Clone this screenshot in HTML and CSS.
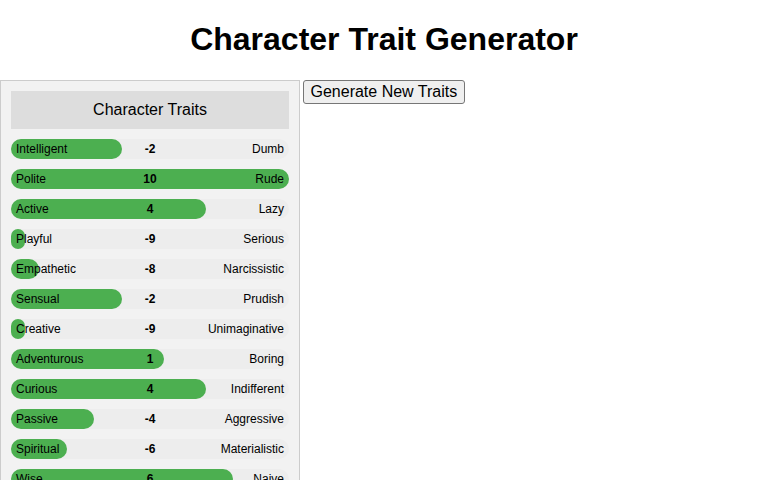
FILE: index.html
```html
<!DOCTYPE html>
<html lang="en">
<head>
<meta charset="utf-8">
<title>Character Trait Generator</title>
<link rel="stylesheet" href="styles.css">
</head>
<body>
<h1 class="title">Character Trait Generator</h1>
<div class="layout">
  <section class="panel">
    <h2 class="panel-head">Character Traits</h2>
    <div class="rows">
      <div class="row"><div class="bar" style="width:111.2px"></div><div class="row-text"><span class="lbl">Intelligent</span><span class="val">-2</span><span class="opp">Dumb</span></div></div>
      <div class="row"><div class="bar" style="width:278px"></div><div class="row-text"><span class="lbl">Polite</span><span class="val">10</span><span class="opp">Rude</span></div></div>
      <div class="row"><div class="bar" style="width:194.6px"></div><div class="row-text"><span class="lbl">Active</span><span class="val">4</span><span class="opp">Lazy</span></div></div>
      <div class="row"><div class="bar" style="width:13.9px"></div><div class="row-text"><span class="lbl">Playful</span><span class="val">-9</span><span class="opp">Serious</span></div></div>
      <div class="row"><div class="bar" style="width:27.8px"></div><div class="row-text"><span class="lbl">Empathetic</span><span class="val">-8</span><span class="opp">Narcissistic</span></div></div>
      <div class="row"><div class="bar" style="width:111.2px"></div><div class="row-text"><span class="lbl">Sensual</span><span class="val">-2</span><span class="opp">Prudish</span></div></div>
      <div class="row"><div class="bar" style="width:13.9px"></div><div class="row-text"><span class="lbl">Creative</span><span class="val">-9</span><span class="opp">Unimaginative</span></div></div>
      <div class="row"><div class="bar" style="width:152.9px"></div><div class="row-text"><span class="lbl">Adventurous</span><span class="val">1</span><span class="opp">Boring</span></div></div>
      <div class="row"><div class="bar" style="width:194.6px"></div><div class="row-text"><span class="lbl">Curious</span><span class="val">4</span><span class="opp">Indifferent</span></div></div>
      <div class="row"><div class="bar" style="width:83.4px"></div><div class="row-text"><span class="lbl">Passive</span><span class="val">-4</span><span class="opp">Aggressive</span></div></div>
      <div class="row"><div class="bar" style="width:55.6px"></div><div class="row-text"><span class="lbl">Spiritual</span><span class="val">-6</span><span class="opp">Materialistic</span></div></div>
      <div class="row"><div class="bar" style="width:222.4px"></div><div class="row-text"><span class="lbl">Wise</span><span class="val">6</span><span class="opp">Naive</span></div></div>
      <div class="row"><div class="bar" style="width:166.8px"></div><div class="row-text"><span class="lbl">Honest</span><span class="val">2</span><span class="opp">Deceitful</span></div></div>
      <div class="row"><div class="bar" style="width:69.5px"></div><div class="row-text"><span class="lbl">Brave</span><span class="val">-5</span><span class="opp">Cowardly</span></div></div>
    </div>
  </section>
  <button class="gen-btn" type="button">Generate New Traits</button>
</div>
</body>
</html>
```

FILE: styles.css
```css
html, body {
  margin: 0;
  padding: 0;
  background: #ffffff;
  font-family: "Liberation Sans", Arial, sans-serif;
  color: #000;
}

.title {
  font-size: 32px;
  font-weight: bold;
  text-align: center;
  margin: 21.44px 0;
  line-height: normal;
}

.layout {
  display: flex;
  align-items: flex-start;
  gap: 3px;
}

.panel {
  width: 278px;
  padding: 10px;
  background: #f2f2f2;
  border: 1px solid #cccccc;
  flex: none;
}

.panel-head {
  margin: 0 0 10px 0;
  padding: 10px;
  background: #dddddd;
  font-size: 16px;
  font-weight: normal;
  text-align: center;
  line-height: 18px;
}

.rows {
  display: flex;
  flex-direction: column;
  gap: 10px;
}

.row {
  display: grid;
  height: 20px;
  background: #ededed;
  border-radius: 10px;
}

.bar {
  grid-area: 1 / 1;
  height: 20px;
  background: #4caf50;
  border-radius: 10px;
}

.row-text {
  grid-area: 1 / 1;
  display: grid;
  grid-template-columns: 1fr auto 1fr;
  align-items: center;
  padding: 0 5px;
  font-size: 12px;
  line-height: 20px;
}

.lbl {
  text-align: left;
}

.val {
  font-weight: bold;
  text-align: center;
}

.opp {
  text-align: right;
}

.gen-btn {
  font-family: "Liberation Sans", Arial, sans-serif;
  font-size: 16px;
  line-height: 18px;
  height: 24px;
  padding: 0 6.5px;
  background: #efefef;
  border: 1px solid #767676;
  border-radius: 3px;
  color: #000;
}
```
